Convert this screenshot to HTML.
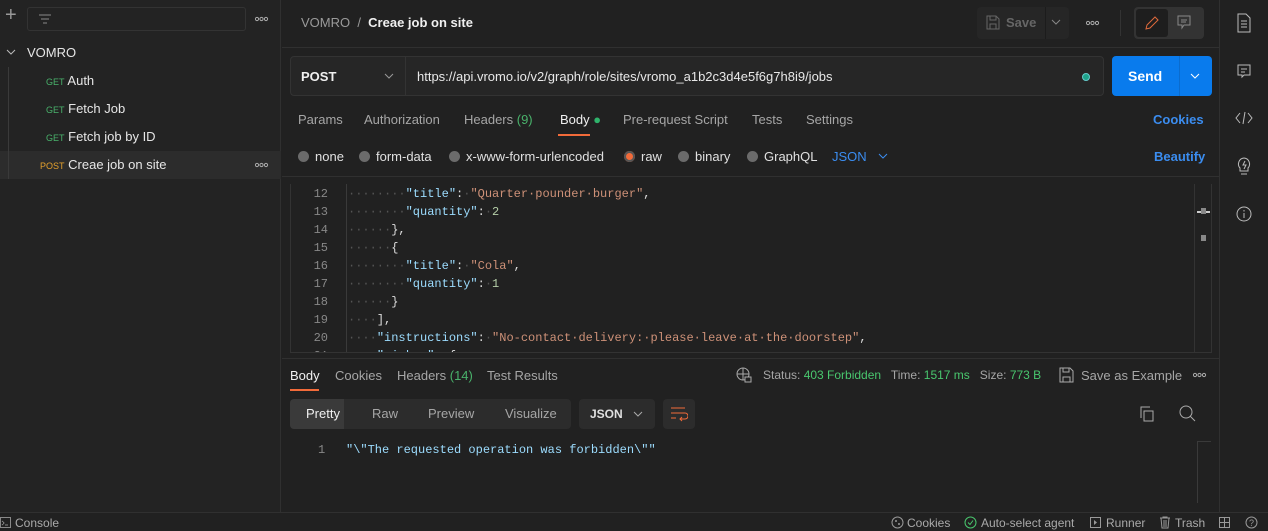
<!DOCTYPE html>
<html><head><meta charset="utf-8"><style>
*{margin:0;padding:0;box-sizing:border-box}
body{width:1268px;height:531px;background:#212121;font-family:"Liberation Sans",sans-serif;font-size:13px;color:#d0d0d0;position:relative;overflow:hidden}
.a{position:absolute;white-space:nowrap}
.mono{font-family:"Liberation Mono",monospace;font-size:12px}
.k{color:#9cdcfe}.s{color:#ce9178}.n{color:#b5cea8}.d{color:#555}
.g{color:#49b26b;font-size:9px}
.r{width:11px;height:11px;border-radius:50%;background:#6b6b6b;display:inline-block;vertical-align:-1px;margin-right:6px}
.mut{color:#a6a6a6}
</style></head><body>
<svg width="0" height="0" style="position:absolute"><defs><g id="dots"><circle cx="2" cy="3" r="1.6" stroke="#aaa" fill="none"/><circle cx="6.5" cy="3" r="1.6" stroke="#aaa" fill="none"/><circle cx="11" cy="3" r="1.6" stroke="#aaa" fill="none"/></g></defs></svg>
<!-- sidebar -->
<div class="a" style="left:0;top:0;width:281px;height:513px;background:#232323;border-right:1px solid #303030"></div>
<div class="a" style="left:5px;top:4px;font-size:20px;color:#999;font-weight:300">+</div>
<div class="a" style="left:27px;top:7px;width:219px;height:24px;border:1px solid #333;border-radius:3px"></div>
<svg class="a" style="left:37px;top:12px" width="16" height="14"><path d="M2 3h12M4 7h8M6 11h4" stroke="#888" stroke-width="1"/></svg>
<svg class="a" style="left:255px;top:16px" width="14" height="6"><use href="#dots"/></svg>
<svg class="a" style="left:6px;top:48px" width="10" height="8"><path d="M1 2l4 4 4-4" stroke="#bbb" fill="none"/></svg>
<div class="a" style="left:27px;top:45px;color:#e6e6e6">VOMRO</div>
<div class="a" style="left:8px;top:67px;width:1px;height:110px;background:#3a3a3a"></div>
<div class="a" style="left:46px;top:73px"><span class="g">GET</span> <span style="color:#e6e6e6">Auth</span></div>
<div class="a" style="left:46px;top:101px"><span class="g">GET</span> <span style="color:#e6e6e6">Fetch Job</span></div>
<div class="a" style="left:46px;top:129px"><span class="g">GET</span> <span style="color:#e6e6e6">Fetch job by ID</span></div>
<div class="a" style="left:0;top:151px;width:281px;height:28px;background:#2c2c2c"></div>
<div class="a" style="left:8px;top:151px;width:1px;height:28px;background:#3a3a3a"></div>
<div class="a" style="left:40px;top:157px"><span style="color:#e4a12c;font-size:9px">POST</span> <span style="color:#e6e6e6">Creae job on site</span></div>
<svg class="a" style="left:255px;top:162px" width="14" height="6"><use href="#dots"/></svg>
<!-- header -->
<div class="a" style="left:282px;top:47px;width:937px;height:1px;background:#303030"></div>
<div class="a" style="left:301px;top:15px;color:#9a9a9a">VOMRO &nbsp;/&nbsp; <span style="color:#f0f0f0;font-weight:bold">Creae job on site</span></div>
<div class="a" style="left:977px;top:7px;width:92px;height:32px;background:#262626;border-radius:4px"></div>
<div class="a" style="left:1045px;top:7px;width:1px;height:32px;background:#1c1c1c"></div>
<svg class="a" style="left:985px;top:14px" width="16" height="17"><path d="M2 2h9l3 3v10H2z M5 2v4h6V2 M5 15v-5h6v5" stroke="#666" fill="none"/></svg>
<div class="a" style="left:1006px;top:15px;color:#666;font-weight:bold">Save</div>
<svg class="a" style="left:1051px;top:19px" width="10" height="7"><path d="M1 1l4 4 4-4" stroke="#888" fill="none"/></svg>
<svg class="a" style="left:1086px;top:20px" width="14" height="6"><use href="#dots"/></svg>
<div class="a" style="left:1120px;top:10px;width:1px;height:26px;background:#333"></div>
<div class="a" style="left:1134px;top:7px;width:70px;height:32px;background:#333;border-radius:4px"></div>
<div class="a" style="left:1136px;top:9px;width:32px;height:28px;background:#1e1e1e;border-radius:3px"></div>
<svg class="a" style="left:1143px;top:14px" width="18" height="18"><path d="M3 15l1-4 8-8 3 3-8 8z" stroke="#e06a3c" fill="none"/></svg>
<svg class="a" style="left:1176px;top:14px" width="16" height="16"><path d="M2 2h12v9H8l-2 3v-3H2z M5 6h6M5 8h5" stroke="#888" fill="none"/></svg>
<!-- right bar -->
<div class="a" style="left:1219px;top:0;width:1px;height:513px;background:#303030"></div>
<svg class="a" style="left:1236px;top:13px" width="16" height="20"><path d="M2 1h8l4 4v14H2z M5 8h6M5 11h6M5 14h6" stroke="#bbb" fill="none"/></svg>
<svg class="a" style="left:1236px;top:63px" width="16" height="16"><path d="M2 2h12v10H8l-2 2v-2H2z M5 6h6M5 9h4" stroke="#bbb" fill="none"/></svg>
<svg class="a" style="left:1235px;top:111px" width="18" height="14"><path d="M5 2L1 7l4 5M13 2l4 5-4 5M10 1L8 13" stroke="#bbb" fill="none"/></svg>
<svg class="a" style="left:1236px;top:157px" width="16" height="19"><path d="M8 1a6 6 0 0 0-4 10v3h8v-3A6 6 0 0 0 8 1z M5 17h6M9 4l-2 4h3l-2 4" stroke="#bbb" fill="none"/></svg>
<svg class="a" style="left:1236px;top:206px" width="16" height="16"><circle cx="8" cy="8" r="7" stroke="#bbb" fill="none"/><path d="M8 7v5M8 4v1.5" stroke="#bbb"/></svg>
<!-- url bar -->
<div class="a" style="left:290px;top:56px;width:814px;height:40px;background:#262626;border:1px solid #333;border-radius:4px"></div>
<div class="a" style="left:405px;top:57px;width:1px;height:38px;background:#333"></div>
<div class="a" style="left:301px;top:69px;color:#f0f0f0;font-weight:bold">POST</div>
<svg class="a" style="left:384px;top:73px" width="10" height="7"><path d="M1 1l4 4 4-4" stroke="#999" fill="none"/></svg>
<div class="a" style="left:417px;top:69px;color:#e8e8e8">https://api.vromo.io/v2/graph/role/sites/vromo_a1b2c3d4e5f6g7h8i9/jobs</div>
<div class="a" style="left:1082px;top:73px;width:8px;height:8px;border-radius:50%;background:#1ea28a;border:1px solid #6cc"></div>
<div class="a" style="left:1112px;top:56px;width:100px;height:40px;background:#097bed;border-radius:4px"></div>
<div class="a" style="left:1179px;top:56px;width:1px;height:40px;background:#0a6ccf"></div>
<div class="a" style="left:1128px;top:68px;color:#fff;font-weight:bold;font-size:14px">Send</div>
<svg class="a" style="left:1190px;top:73px" width="10" height="7"><path d="M1 1l4 4 4-4" stroke="#fff" fill="none"/></svg>
<!-- tabs -->
<div class="a mut" style="left:298px;top:112px">Params</div>
<div class="a mut" style="left:364px;top:112px">Authorization</div>
<div class="a mut" style="left:464px;top:112px">Headers <span style="color:#49b26b">(9)</span></div>
<div class="a" style="left:560px;top:112px;color:#f0f0f0">Body <span style="color:#2fb36b">●</span></div>
<div class="a" style="left:558px;top:134px;width:32px;height:2px;background:#f26b3a"></div>
<div class="a mut" style="left:623px;top:112px">Pre-request Script</div>
<div class="a mut" style="left:752px;top:112px">Tests</div>
<div class="a mut" style="left:806px;top:112px">Settings</div>
<div class="a" style="left:1153px;top:112px;color:#3b8df0;font-weight:bold">Cookies</div>
<div class="a" style="left:298px;top:149px;color:#e0e0e0"><span class="r"></span>none</div>
<div class="a" style="left:359px;top:149px;color:#e0e0e0"><span class="r"></span>form-data</div>
<div class="a" style="left:449px;top:149px;color:#e0e0e0"><span class="r"></span>x-www-form-urlencoded</div>
<div class="a" style="left:624px;top:149px;color:#e0e0e0"><span class="r" style="background:#f26b3a;box-shadow:0 0 0 2px #555 inset"></span>raw</div>
<div class="a" style="left:678px;top:149px;color:#e0e0e0"><span class="r"></span>binary</div>
<div class="a" style="left:747px;top:149px;color:#e0e0e0"><span class="r"></span>GraphQL</div>
<div class="a" style="left:832px;top:149px;color:#3b8df0">JSON</div>
<svg class="a" style="left:878px;top:153px" width="10" height="7"><path d="M1 1l4 4 4-4" stroke="#3b8df0" fill="none"/></svg>
<div class="a" style="left:1154px;top:149px;color:#3b8df0;font-weight:bold">Beautify</div>
<div class="a" style="left:282px;top:176px;width:937px;height:1px;background:#303030"></div>
<!-- editor -->
<div class="a" style="left:290px;top:184px;width:922px;height:169px;border:1px solid #333;border-top:none;overflow:hidden">
<div class="a" style="left:55px;top:0;width:1px;height:169px;background:#3a3a3a"></div>
<div class="a" style="left:903px;top:0;width:1px;height:169px;background:#333"></div>
<div class="a" style="left:906px;top:27px;width:13px;height:2px;background:#ccc"></div>
<div class="a" style="left:910px;top:24px;width:5px;height:6px;background:#888"></div>
<div class="a" style="left:910px;top:51px;width:5px;height:6px;background:#888"></div>
<div class="a mono" style="left:0;top:1px;line-height:18px;width:37px;text-align:right;color:#888">12<br>13<br>14<br>15<br>16<br>17<br>18<br>19<br>20<br>21</div>
<div class="a mono" style="left:57px;top:1px;line-height:18px;color:#ddd">
<span class="d">········</span><span class="k">"title"</span>:<span class="d">·</span><span class="s">"Quarter·pounder·burger"</span>,<br>
<span class="d">········</span><span class="k">"quantity"</span>:<span class="d">·</span><span class="n">2</span><br>
<span class="d">······</span>},<br>
<span class="d">······</span>{<br>
<span class="d">········</span><span class="k">"title"</span>:<span class="d">·</span><span class="s">"Cola"</span>,<br>
<span class="d">········</span><span class="k">"quantity"</span>:<span class="d">·</span><span class="n">1</span><br>
<span class="d">······</span>}<br>
<span class="d">····</span>],<br>
<span class="d">····</span><span class="k">"instructions"</span>:<span class="d">·</span><span class="s">"No-contact·delivery:·please·leave·at·the·doorstep"</span>,<br>
<span class="d">····</span><span class="k">"pickup"</span>:<span class="d">·</span>{
</div></div>
<div class="a" style="left:282px;top:358px;width:937px;height:1px;background:#303030"></div>
<!-- response -->
<div class="a" style="left:290px;top:368px;color:#f0f0f0">Body</div>
<div class="a" style="left:290px;top:389px;width:29px;height:2px;background:#f26b3a"></div>
<div class="a mut" style="left:335px;top:368px">Cookies</div>
<div class="a mut" style="left:397px;top:368px">Headers <span style="color:#49b26b">(14)</span></div>
<div class="a mut" style="left:487px;top:368px">Test Results</div>
<svg class="a" style="left:736px;top:367px" width="16" height="16"><circle cx="7" cy="7" r="6" stroke="#aaa" fill="none"/><path d="M1 7h12M7 1v12" stroke="#aaa"/><rect x="9" y="10" width="6" height="5" fill="#212121" stroke="#aaa"/></svg>
<div class="a" style="left:763px;top:368px;font-size:12px;color:#a6a6a6">Status: <span style="color:#49c76e">403 Forbidden</span> &nbsp; Time: <span style="color:#49c76e">1517 ms</span> &nbsp; Size: <span style="color:#49c76e">773 B</span></div>
<svg class="a" style="left:1059px;top:367px" width="15" height="16"><path d="M1 1h10l3 3v11H1z M4 1v4h6V1 M4 15v-5h7v5" stroke="#aaa" fill="none"/></svg>
<div class="a mut" style="left:1081px;top:368px">Save as Example</div>
<svg class="a" style="left:1193px;top:372px" width="14" height="6"><use href="#dots"/></svg>
<div class="a" style="left:290px;top:399px;width:281px;height:30px;background:#2c2c2c;border-radius:4px"></div>
<div class="a" style="left:290px;top:399px;width:54px;height:30px;background:#3a3a3a;border-radius:4px 0 0 4px"></div>
<div class="a" style="left:306px;top:406px;color:#f0f0f0">Pretty</div>
<div class="a mut" style="left:372px;top:406px">Raw</div>
<div class="a mut" style="left:428px;top:406px">Preview</div>
<div class="a mut" style="left:505px;top:406px">Visualize</div>
<div class="a" style="left:579px;top:399px;width:76px;height:30px;background:#2c2c2c;border-radius:4px"></div>
<div class="a" style="left:590px;top:407px;color:#e0e0e0;font-size:12px;font-weight:bold">JSON</div>
<svg class="a" style="left:633px;top:411px" width="10" height="7"><path d="M1 1l4 4 4-4" stroke="#aaa" fill="none"/></svg>
<div class="a" style="left:663px;top:399px;width:32px;height:30px;background:#2c2c2c;border-radius:4px"></div>
<svg class="a" style="left:670px;top:406px" width="18" height="16"><path d="M1 2h14M1 7h14a3 3 0 0 1 0 6h-5M12 11l-2 2 2 2M1 12h5" stroke="#f26b3a" fill="none"/></svg>
<svg class="a" style="left:1139px;top:406px" width="16" height="16"><path d="M5 5h9v10H5z M2 12V1h9" stroke="#aaa" fill="none"/></svg>
<svg class="a" style="left:1179px;top:405px" width="17" height="17"><circle cx="7" cy="7" r="6" stroke="#aaa" fill="none"/><path d="M11 11l5 5" stroke="#aaa"/></svg>
<div class="a" style="left:1197px;top:441px;width:1px;height:62px;background:#3a3a3a"></div>
<div class="a" style="left:1197px;top:441px;width:14px;height:1px;background:#3a3a3a"></div>
<div class="a mono" style="left:318px;top:443px;color:#888">1</div>
<div class="a mono" style="left:346px;top:443px;color:#9cdcfe">"\"The requested operation was forbidden\""</div>
<!-- status bar -->
<div class="a" style="left:0;top:512px;width:1268px;height:1px;background:#303030"></div>
<div class="a" style="left:0;top:513px;width:1268px;height:18px;background:#212121"></div>
<svg class="a" style="left:0;top:517px" width="11" height="11"><rect x="0.5" y="0.5" width="10" height="10" stroke="#888" fill="none"/><path d="M2 4l2 2-2 2M5 8h3" stroke="#888"/></svg>
<div class="a" style="left:15px;top:516px;font-size:12px;color:#aaa">Console</div>
<svg class="a" style="left:891px;top:516px" width="13" height="13"><circle cx="6.5" cy="6.5" r="5.5" stroke="#999" fill="none"/><circle cx="5" cy="5" r="1" fill="#999"/><circle cx="8" cy="8" r="1" fill="#999"/></svg>
<div class="a" style="left:907px;top:516px;font-size:12px;color:#aaa">Cookies</div>
<svg class="a" style="left:964px;top:516px" width="13" height="13"><circle cx="6.5" cy="6.5" r="5.5" stroke="#49c76e" fill="none"/><path d="M4 6.5l2 2 3-4" stroke="#49c76e" fill="none"/></svg>
<div class="a" style="left:981px;top:516px;font-size:12px;color:#aaa">Auto-select agent</div>
<svg class="a" style="left:1090px;top:517px" width="11" height="11"><rect x="0.5" y="0.5" width="10" height="10" stroke="#999" fill="none"/><path d="M4 3l3 2.5L4 8z" fill="#999"/></svg>
<div class="a" style="left:1106px;top:516px;font-size:12px;color:#aaa">Runner</div>
<svg class="a" style="left:1159px;top:516px" width="12" height="13"><path d="M1 2h10M4 2V1h4v1M2 2l1 10h6l1-10M5 4v7M7 4v7" stroke="#999" fill="none"/></svg>
<div class="a" style="left:1175px;top:516px;font-size:12px;color:#aaa">Trash</div>
<svg class="a" style="left:1219px;top:517px" width="11" height="11"><rect x="0.5" y="0.5" width="10" height="10" stroke="#999" fill="none"/><path d="M5.5 1v9M1 5.5h9" stroke="#999"/></svg>
<svg class="a" style="left:1245px;top:516px" width="13" height="13"><circle cx="6.5" cy="6.5" r="5.5" stroke="#999" fill="none"/><text x="4" y="10" font-size="9" fill="#999" font-family="Liberation Sans">?</text></svg>
</body></html>
